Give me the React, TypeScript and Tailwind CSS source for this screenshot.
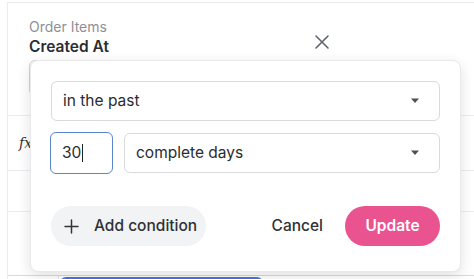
import React from "react";

function Caret() {
  return (
    <svg width="10" height="6" viewBox="0 0 10 6" className="shrink-0">
      <path d="M1 0.5 H9 L5 5 Z" fill="#4b4f56" />
    </svg>
  );
}

export default function App() {
  return (
    <div
      className="relative w-[474px] h-[279px] overflow-hidden bg-white"
      style={{ fontFamily: "Inter, 'Noto Sans', sans-serif" }}
    >
      {/* underlying panel */}
      <div className="ml-[7px] mt-[2px] h-[300px] border-l border-t border-[#ececef] flex flex-col">
        <div className="h-[113px] border-b border-[#ececef] relative">
          <div className="pl-[21px] pt-[15px]">
            <div className="text-[14px] leading-[18px] text-[#8d9098]">Order Items</div>
            <div className="text-[15.5px] leading-[21px] font-semibold text-[#2b2d31]">Created At</div>
          </div>
          <div className="absolute left-[306px] top-[31px]">
            <svg width="16" height="16" viewBox="0 0 16 16">
              <path d="M2 2 L14 14 M14 2 L2 14" stroke="#5f636b" strokeWidth="1.6" strokeLinecap="round" />
            </svg>
          </div>
          <div className="ml-[21px] mt-[3px] w-[306px] h-[36px] rounded-md border border-[#d4d5d9]" />
        </div>
        <div className="h-[55px] border-b border-[#ececef] flex items-center pl-[11px]">
          <span className="text-[14px] italic text-[#333]" style={{ fontFamily: "'DejaVu Serif', serif" }}>
            fx
          </span>
        </div>
        <div className="h-[41px] border-b border-[#ececef]" />
        <div className="h-[64px] border-b border-[#d8d9dc]" />
        <div className="flex h-[20px]">
          <div className="w-[51px] border-r border-[#e4e5e8]" />
          <div className="ml-[1px] mt-[1px] w-[203px] h-[20px] rounded-t-md border-2 border-[#4a78d6] bg-[#4a78d6]" />
        </div>
      </div>

      {/* popover */}
      <div className="absolute left-[30px] top-[60px] w-[431px] h-[212px] rounded-lg bg-white border border-[#e8e9ec] shadow-[0_4px_14px_rgba(0,0,0,0.12)] px-[20px] pt-[20px] flex flex-col">
        <div className="h-[40px] rounded-md border border-[#d9dadd] flex items-center justify-between pl-[11px] pr-[19px]">
          <span className="text-[15.5px] text-[#2a2c30]">in the past</span>
          <Caret />
        </div>
        <div className="mt-[11px] flex gap-[11px] items-center">
          <div className="-ml-[1px] w-[63px] h-[42px] rounded-md border-[1.5px] border-[#5a85cf] flex items-center pl-[11px]">
            <span className="text-[15.5px] text-[#2a2c30]">30</span>
            <span className="ml-[1px] w-[1px] h-[18px] bg-[#222]" />
          </div>
          <div className="flex-1 h-[40px] rounded-md border border-[#d9dadd] flex items-center justify-between pl-[11px] pr-[19px]">
            <span className="text-[15.5px] text-[#2a2c30]">complete days</span>
            <Caret />
          </div>
        </div>
        <div className="mt-[32px] flex items-center">
          <div className="w-[155px] h-[40px] rounded-full bg-[#f2f3f5] flex items-center pl-[13px]">
            <svg width="15" height="15" viewBox="0 0 15 15">
              <path d="M7.5 1 V14 M1 7.5 H14" stroke="#33353a" strokeWidth="1.5" strokeLinecap="round" />
            </svg>
            <span className="ml-[15px] text-[15.5px] font-medium text-[#2f3136]">Add condition</span>
          </div>
          <div className="flex-1" />
          <span className="text-[15.5px] font-medium text-[#2f3136] mr-[22px]">Cancel</span>
          <div className="w-[95px] h-[40px] rounded-full bg-[#e9538f] flex items-center justify-center">
            <span className="text-[15.5px] font-semibold text-white">Update</span>
          </div>
        </div>
      </div>
    </div>
  );
}
